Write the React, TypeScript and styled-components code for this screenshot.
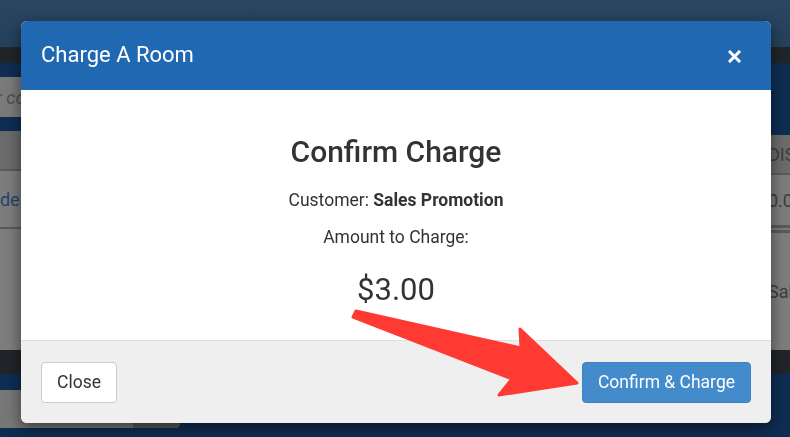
import styled, { createGlobalStyle } from 'styled-components';

const GlobalStyle = createGlobalStyle`
  html, body {
    margin: 0;
    padding: 0;
    width: 790px;
    height: 437px;
    overflow: hidden;
    font-family: Roboto, 'Liberation Sans', sans-serif;
  }
  * { box-sizing: border-box; }
`;

const App = (): JSX.Element => {
  return (
    <>
      <GlobalStyle />
      <Page>
        <TopBar />
        <NavStrip />
        <Content>
          <LeftCol>
            <SubBar />
            <SearchRow>
              <Placeholder>r contact</Placeholder>
            </SearchRow>
            <SubBar />
            <TableHead />
            <TableRow>
              <LinkText>nder</LinkText>
            </TableRow>
            <Filler />
          </LeftCol>
          <RightCol>
            <SubBar $tall />
            <TableHead>
              <Cell>DISCOUNT</Cell>
            </TableHead>
            <TableRow $double>
              <Cell>0.00</Cell>
            </TableRow>
            <Filler>
              <Cell>Sales</Cell>
            </Filler>
          </RightCol>
        </Content>
        <NavStrip $tall />
        <BottomArea>
          <InputGroup>
            <FakeInput />
            <FakeButton />
          </InputGroup>
        </BottomArea>
      </Page>

      <Backdrop>
        <Modal>
          <Header>
            <Title>Charge A Room</Title>
            <CloseX aria-label="close">
              <svg width="13" height="13" viewBox="0 0 13 13">
                <path d="M2 2 L11 11 M11 2 L2 11" stroke="#fff" strokeWidth="3" strokeLinecap="square" />
              </svg>
            </CloseX>
          </Header>
          <Body>
            <Heading>Confirm Charge</Heading>
            <Line $gap={20}>Customer: <strong>Sales Promotion</strong></Line>
            <Line $gap={13}>Amount to Charge:</Line>
            <Amount>$3.00</Amount>
          </Body>
          <Footer>
            <Button>Close</Button>
            <Button $primary>Confirm &amp; Charge</Button>
          </Footer>
        </Modal>
      </Backdrop>

      <Arrow width="790" height="437" viewBox="0 0 790 437">
        <path
          d="M356 311 L521 348 L520 329 L577 383 L499 395 L512 379 L353 317 Z"
          fill="#fe3a32"
          stroke="#fe3a32"
          strokeWidth="3"
          strokeLinejoin="round"
        />
      </Arrow>
    </>
  )
}

const Page = styled.div`
  width: 790px;
  height: 437px;
  display: flex;
  flex-direction: column;
  background: #1c5aa4;
`;

const TopBar = styled.div`
  height: 47px;
  background: linear-gradient(#548cc0, #4882b6);
`;

const NavStrip = styled.div<{ $tall?: boolean }>`
  height: ${p => (p.$tall ? 24 : 16)}px;
  background: #424850;
`;

const Content = styled.div`
  height: 287px;
  display: grid;
  grid-template-columns: 1fr 1fr;
`;

const LeftCol = styled.div`
  display: flex;
  flex-direction: column;
`;

const RightCol = styled.div`
  display: flex;
  flex-direction: column;
`;

const SubBar = styled.div<{ $tall?: boolean }>`
  height: ${p => (p.$tall ? 72 : 14)}px;
  background: #1c5aa4;
`;

const SearchRow = styled.div`
  height: 40px;
  background: #f4f4f4;
  display: flex;
  align-items: center;
  overflow: hidden;
`;

const Placeholder = styled.span`
  margin-left: -4px;
  font-size: 18px;
  font-style: italic;
  color: #9a9a9a;
  white-space: nowrap;
`;

const TableHead = styled.div`
  height: 40px;
  background: #d6d6d6;
  border-bottom: 2px solid #b4b4b4;
  display: flex;
  align-items: center;
  justify-content: flex-end;
  overflow: hidden;
`;

const TableRow = styled.div<{ $double?: boolean }>`
  height: 58px;
  background: #f8f8f8;
  border-bottom: ${p => (p.$double ? '8px double #b4b4b4' : '2px solid #b4b4b4')};
  display: flex;
  align-items: center;
  justify-content: flex-end;
  overflow: hidden;
`;

const LinkText = styled.span`
  margin-right: auto;
  margin-left: -10px;
  font-size: 18px;
  color: #4a8ad0;
`;

const Filler = styled.div`
  flex: 1;
  background: #fafafa;
  display: flex;
  align-items: center;
  justify-content: flex-end;
  overflow: hidden;
`;

const Cell = styled.span`
  width: 22px;
  font-size: 18px;
  color: #7a7a7a;
  white-space: nowrap;
  overflow: hidden;
`;

const BottomArea = styled.div`
  flex: 1;
  padding-top: 16px;
`;

const InputGroup = styled.div`
  display: flex;
  height: 38px;
`;

const FakeInput = styled.div`
  width: 133px;
  background: #eeeeee;
`;

const FakeButton = styled.div`
  width: 47px;
  background: #b0b0b0;
  border-radius: 0 4px 4px 0;
`;

const Backdrop = styled.div`
  position: fixed;
  inset: 0;
  background: rgba(0, 0, 0, 0.5);
  padding: 21px 19px 0 21px;
`;

const Modal = styled.div`
  width: 750px;
  background: #fff;
  border-radius: 6px;
  overflow: hidden;
  box-shadow: 0 5px 15px rgba(0, 0, 0, 0.5);
`;

const Header = styled.div`
  height: 69px;
  background: #2068b2;
  display: flex;
  align-items: center;
  justify-content: space-between;
  padding: 0 30px 0 20px;
`;

const Title = styled.h4`
  margin: 0;
  font-size: 22px;
  font-weight: 400;
  color: #fff;
  padding-bottom: 2px;
`;

const CloseX = styled.span`
  display: flex;
  align-items: center;
  margin-top: 1px;
`;

const Body = styled.div`
  height: 250px;
  padding: 45px 20px 0;
  display: flex;
  flex-direction: column;
  align-items: center;
  color: #333;
`;

const Heading = styled.h2`
  margin: 0;
  font-size: 30px;
  font-weight: 500;
  line-height: 33px;
`;

const Line = styled.p<{ $gap: number }>`
  margin: ${p => p.$gap}px 0 0;
  font-size: 17.5px;
  line-height: 24px;

  strong { font-weight: 700; }
`;

const Amount = styled.div`
  margin-top: 24px;
  font-size: 31px;
  line-height: 33px;
`;

const Footer = styled.div`
  height: 83px;
  background: #efefef;
  border-top: 1px solid #e0e0e0;
  padding: 0 20px;
  display: flex;
  align-items: center;
  justify-content: space-between;
`;

const Button = styled.button<{ $primary?: boolean }>`
  height: 41px;
  padding: 0 15px;
  border-radius: 4px;
  font-family: Roboto, 'Liberation Sans', sans-serif;
  font-size: 17.5px;
  border: 1px solid ${p => (p.$primary ? '#3f82c2' : '#cccccc')};
  background: ${p => (p.$primary ? '#448bcb' : '#fff')};
  color: ${p => (p.$primary ? '#fff' : '#333')};
  cursor: pointer;
`;

const Arrow = styled.svg`
  position: fixed;
  left: 0;
  top: 0;
  pointer-events: none;
`;

export default App
